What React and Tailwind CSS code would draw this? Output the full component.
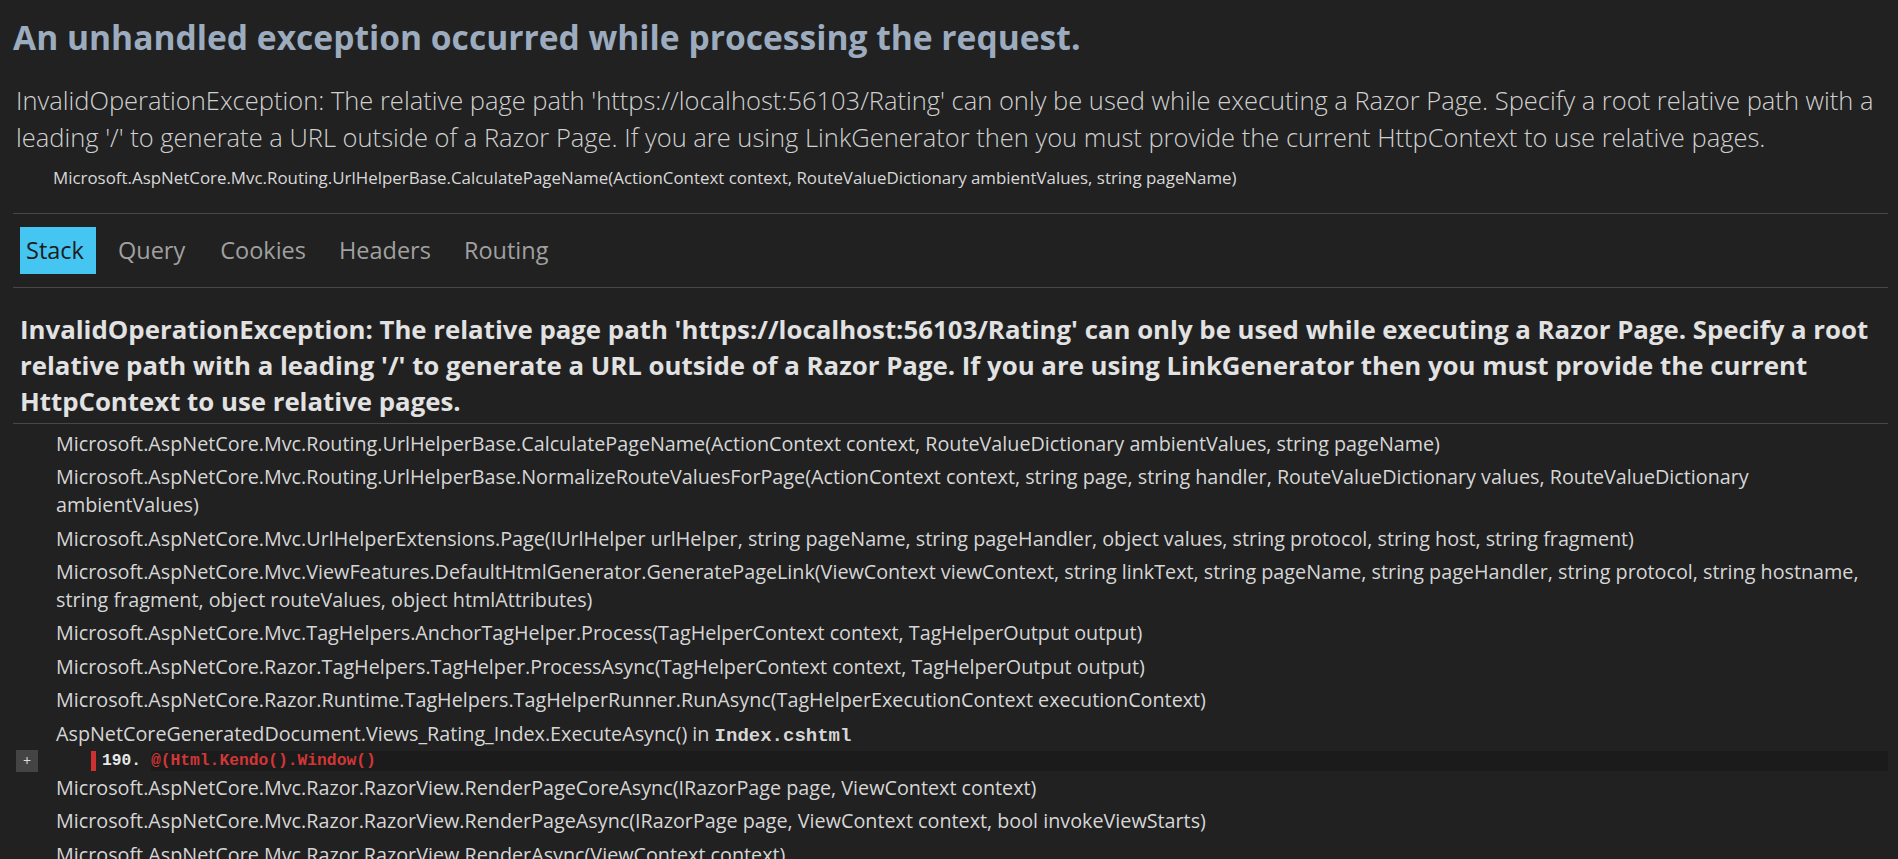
import React from 'react';

const frames = [
  'Microsoft.AspNetCore.Mvc.Routing.UrlHelperBase.CalculatePageName(ActionContext context, RouteValueDictionary ambientValues, string pageName)',
  'Microsoft.AspNetCore.Mvc.Routing.UrlHelperBase.NormalizeRouteValuesForPage(ActionContext context, string page, string handler, RouteValueDictionary values, RouteValueDictionary ambientValues)',
  'Microsoft.AspNetCore.Mvc.UrlHelperExtensions.Page(IUrlHelper urlHelper, string pageName, string pageHandler, object values, string protocol, string host, string fragment)',
  'Microsoft.AspNetCore.Mvc.ViewFeatures.DefaultHtmlGenerator.GeneratePageLink(ViewContext viewContext, string linkText, string pageName, string pageHandler, string protocol, string hostname, string fragment, object routeValues, object htmlAttributes)',
  'Microsoft.AspNetCore.Mvc.TagHelpers.AnchorTagHelper.Process(TagHelperContext context, TagHelperOutput output)',
  'Microsoft.AspNetCore.Razor.TagHelpers.TagHelper.ProcessAsync(TagHelperContext context, TagHelperOutput output)',
  'Microsoft.AspNetCore.Razor.Runtime.TagHelpers.TagHelperRunner.RunAsync(TagHelperExecutionContext executionContext)',
];

const moreFrames = [
  'Microsoft.AspNetCore.Mvc.Razor.RazorView.RenderPageCoreAsync(IRazorPage page, ViewContext context)',
  'Microsoft.AspNetCore.Mvc.Razor.RazorView.RenderPageAsync(IRazorPage page, ViewContext context, bool invokeViewStarts)',
  'Microsoft.AspNetCore.Mvc.Razor.RazorView.RenderAsync(ViewContext context)',
];

// spacing per tab, the selected one has a slightly wider box
const tabs = [
  { name: 'Stack', cls: 'h-[47px] pl-[6px] pr-[12px] flex items-center text-[23.5px] bg-[#44c5f2] text-[#1c1c1c]' },
  { name: 'Query', cls: 'h-[47px] ml-[14px] px-[8px] flex items-center text-[23.5px] text-[#a0a0a0]' },
  { name: 'Cookies', cls: 'h-[47px] ml-[19px] px-[8px] flex items-center text-[23.5px] text-[#a0a0a0]' },
  { name: 'Headers', cls: 'h-[47px] ml-[17px] px-[8px] flex items-center text-[23.5px] text-[#a0a0a0]' },
  { name: 'Routing', cls: 'h-[47px] ml-[17px] px-[8px] flex items-center text-[23.5px] text-[#a0a0a0]' },
];

const message =
  "InvalidOperationException: The relative page path 'https://localhost:56103/Rating' can only be used while executing a Razor Page. Specify a root relative path with a leading '/' to generate a URL outside of a Razor Page. If you are using LinkGenerator then you must provide the current HttpContext to use relative pages.";

const Frame = ({ children }) => (
  <li className="px-[3px] py-[2.7px] text-[19.75px] leading-[28px] text-[#d6d6d6]">{children}</li>
);

const App = () => {
  return (
    <div
      className="min-h-screen bg-[#212121] pl-[13px] pr-[10px] overflow-hidden"
      style={{ fontFamily: '"Segoe UI", "Open Sans", sans-serif' }}
    >
      <h1 className="pt-[14px] text-[33.6px] leading-[46px] font-bold text-[#9cacbe]">
        An unhandled exception occurred while processing the request.
      </h1>
      <div className="mt-[22px] px-[3px] text-[25.5px] leading-[36.5px] font-light text-[#d0d0d0]">
        {message}
      </div>
      <p className="ml-[40px] mt-[11px] text-[16.9px] leading-[24px] text-[#d8d8d8]">
        Microsoft.AspNetCore.Mvc.Routing.UrlHelperBase.CalculatePageName(ActionContext context, RouteValueDictionary
        ambientValues, string pageName)
      </p>
      <ul className="mt-[23px] flex border-y border-[#474747] py-[13px] pl-[7px]">
        {tabs.map((tab) => (
          <li key={tab.name} className={tab.cls}>
            {tab.name}
          </li>
        ))}
      </ul>
      <h2 className="mt-[23px] border-b border-[#474747] px-[7px] pb-[4px] text-[25.8px] leading-[36px] font-bold text-[#e2e2e2]">
        {message}
      </h2>
      <ul className="ml-[40px] pt-[3.3px]">
        {frames.map((f) => (
          <Frame key={f}>{f}</Frame>
        ))}
        <Frame>
          AspNetCoreGeneratedDocument.Views_Rating_Index.ExecuteAsync() in{' '}
          <code className="font-bold text-[19px]" style={{ fontFamily: '"Liberation Mono", monospace' }}>
            Index.cshtml
          </code>
        </Frame>
      </ul>
      <div className="h-[19.8px] flex items-start -mt-[1px]">
        <button className="ml-[3px] h-[22px] w-[22px] bg-[#444444] text-[#dddddd] text-[14px] leading-[22px] -mt-[1px]">
          +
        </button>
        <div className="ml-[53px] h-full w-[5px] bg-[#cf3131]"></div>
        <div
          className="flex h-full flex-1 items-center font-bold text-[16.3px]"
          style={{ fontFamily: '"Liberation Mono", monospace' }}
        >
          <span className="w-[55px] pl-[6px] text-[#e8e8e8]">190.</span>
          <span className="h-full flex-1 bg-[#1b1b1b] text-[#d23636] flex items-center">@(Html.Kendo().Window()</span>
        </div>
      </div>
      <ul className="ml-[40px]">
        {moreFrames.map((f) => (
          <Frame key={f}>{f}</Frame>
        ))}
      </ul>
    </div>
  );
};

export default App;
